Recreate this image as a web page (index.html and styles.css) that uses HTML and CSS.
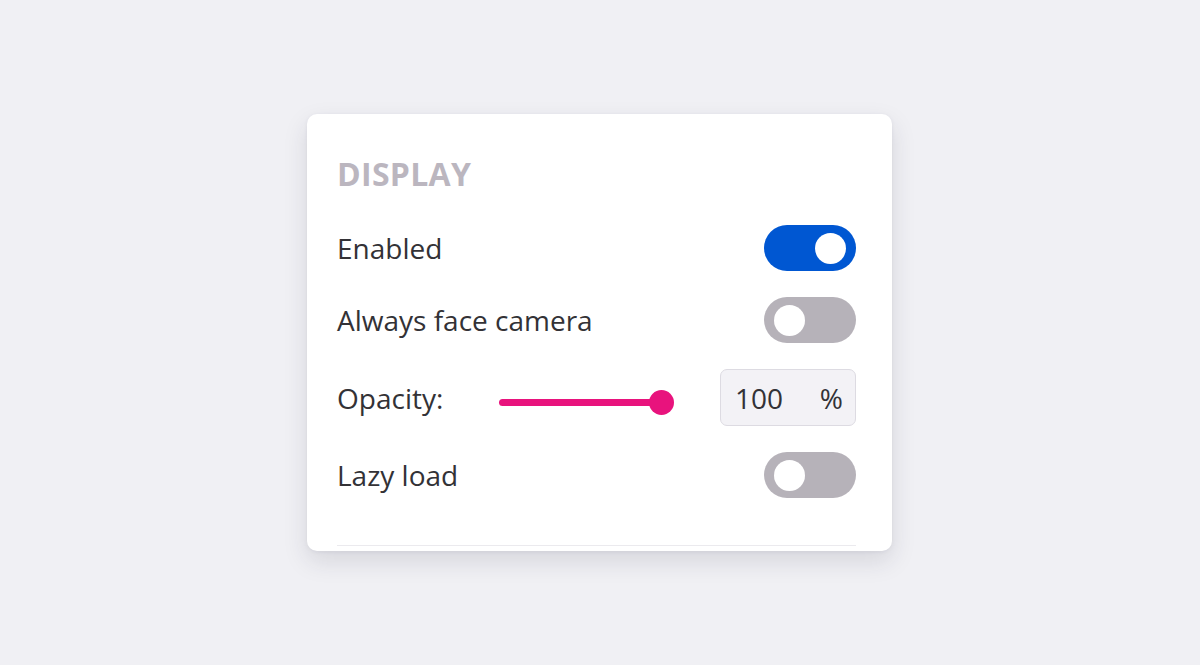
FILE: index.html
```html
<!DOCTYPE html>
<html lang="en">
<head>
<meta charset="utf-8">
<title>Display settings</title>
<link rel="stylesheet" href="styles.css">
</head>
<body>
<div class="page">
  <section class="card">
    <h2 class="heading">DISPLAY</h2>
    <div class="rows">
      <div class="row">
        <span class="label">Enabled</span>
        <span class="toggle on"><span class="knob"></span></span>
      </div>
      <div class="row">
        <span class="label">Always face camera</span>
        <span class="toggle"><span class="knob"></span></span>
      </div>
      <div class="row">
        <span class="label opacity-label">Opacity:</span>
        <span class="slider"><span class="track"></span><span class="thumb"></span></span>
        <span class="numbox"><span class="num">100</span><span class="unit">%</span></span>
      </div>
      <div class="row">
        <span class="label">Lazy load</span>
        <span class="toggle"><span class="knob"></span></span>
      </div>
    </div>
    <div class="divider"></div>
  </section>
</div>
</body>
</html>
```
FILE: styles.css
```css
html, body {
  margin: 0;
  padding: 0;
}
body {
  background: #f0f0f4;
  font-family: "Open Sans", "Noto Sans", sans-serif;
  color: #333236;
}
.page {
  width: 1200px;
  height: 665px;
  display: flex;
  align-items: center;
  justify-content: center;
}
.card {
  width: 585px;
  box-sizing: border-box;
  background: #ffffff;
  border-radius: 10px;
  padding: 38px 36px 5px 30px;
  box-shadow: 0 10px 24px rgba(40, 36, 60, 0.13), 0 1px 4px rgba(40, 36, 60, 0.06);
  margin: 0 0 0 -1px;
}
.heading {
  margin: 0;
  font-size: 32px;
  font-weight: 700;
  letter-spacing: 0.3px;
  line-height: 44px;
  color: #bbb6bf;
}
.rows {
  margin-top: 29px;
  display: flex;
  flex-direction: column;
  gap: 26px;
}
.row {
  display: flex;
  align-items: center;
  min-height: 46px;
}
.label {
  font-size: 28px;
  line-height: 38px;
  flex: 1;
}
.opacity-label {
  flex: 0 0 162px;
}
.toggle {
  width: 92px;
  height: 46px;
  border-radius: 23px;
  background: #b6b2b9;
  box-sizing: border-box;
  padding: 0 10px;
  display: flex;
  align-items: center;
  justify-content: flex-start;
}
.toggle.on {
  background: #0057d2;
  justify-content: flex-end;
}
.knob {
  width: 31px;
  height: 31px;
  border-radius: 50%;
  background: #ffffff;
}
.slider {
  width: 175px;
  display: flex;
  align-items: center;
  margin-top: 9px;
}
.track {
  flex: 1;
  height: 7px;
  border-radius: 4px;
  background: #e8137d;
  margin-right: -12px;
}
.thumb {
  width: 25px;
  height: 25px;
  border-radius: 50%;
  background: #e8137d;
}
.numbox {
  margin-left: auto;
  width: 136px;
  height: 57px;
  box-sizing: border-box;
  border: 1.5px solid #dddbe2;
  border-radius: 7px;
  background: #f3f2f6;
  display: flex;
  align-items: center;
  justify-content: space-between;
  padding: 0 12px 0 14px;
  font-size: 28px;
}
.divider {
  margin-top: 47px;
  height: 1px;
  background: #ebeaee;
}
```
